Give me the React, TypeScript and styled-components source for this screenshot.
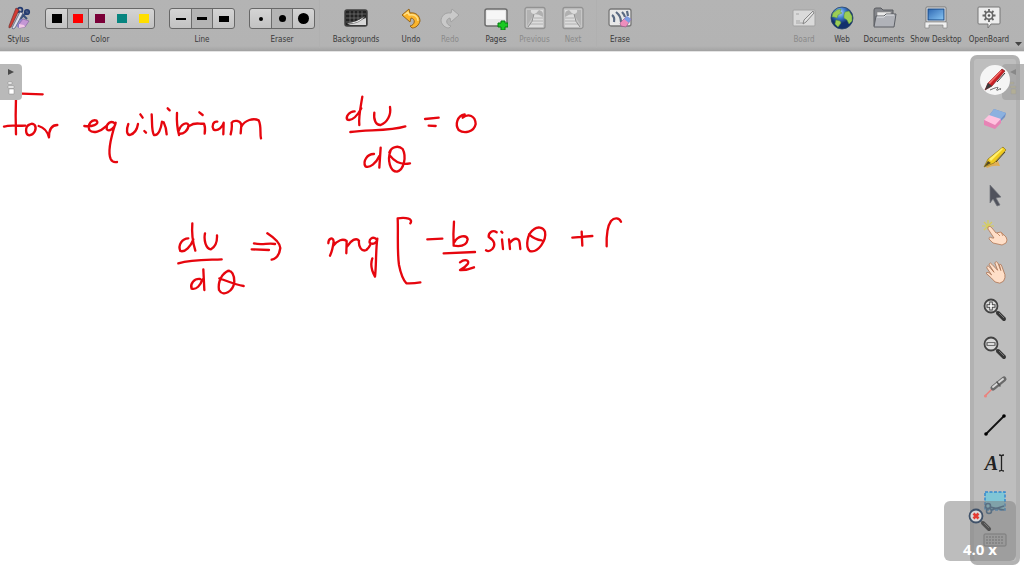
import React from "react";
import styled, { createGlobalStyle } from "styled-components";

const GlobalStyle = createGlobalStyle`
  *, *::before, *::after { box-sizing: border-box; }
  body {
    margin: 0;
    background: #fff;
    font-family: "DejaVu Sans Condensed", "Open Sans", "Noto Sans", sans-serif;
    color: #3a3a3a;
  }
  button { font: inherit; color: inherit; }
`;

const Page = styled.div`
  display: flex;
  flex-direction: column;
  min-height: 100vh;
`;

const Toolbar = styled.header`
  display: flex;
  align-items: stretch;
  height: 52px;
  background: linear-gradient(#b4b4b4 0, #b3b3b3 46px, #a6a6a6 50px, #a0a0a0 51px, #e4e4e4 51px);
`;

const Spacer = styled.div`
  flex: 1;
`;

const Divider = styled.div<{ $w: number }>`
  width: ${(p) => p.$w}px;
  flex: none;
  background: linear-gradient(90deg, transparent 45%, #b0b0b0 45%, #b0b0b0 55%, transparent 55%);
  margin-bottom: 4px;
`;

const ToolButton = styled.button<{ $w: number }>`
  display: flex;
  flex-direction: column;
  flex: none;
  align-items: center;
  width: ${(p) => p.$w}px;
  padding: 5px 0 0;
  border: 0;
  background: none;
  font-size: 8px;
  line-height: 12px;
  white-space: nowrap;
  &:disabled { color: #8a8a8a; }
`;

const IconSlot = styled.span`
  display: flex;
  align-items: center;
  justify-content: center;
  height: 26px;
  margin-bottom: 3px;
`;

const Group = styled.div`
  display: flex;
  flex-direction: column;
  align-items: center;
  flex: none;
  margin-left: 8px;
  padding-top: 8px;
  font-size: 8px;
  line-height: 12px;
  & + & { margin-left: 14px; }
`;

const Segments = styled.div`
  display: flex;
  height: 21px;
  margin-bottom: 5px;
  border: 1px solid #686868;
  border-radius: 3px;
  overflow: hidden;
  background: linear-gradient(#d4d4d4, #c2c2c2);
`;

const Segment = styled.button`
  display: flex;
  align-items: center;
  justify-content: center;
  width: 22px;
  padding: 0;
  border: 0;
  background: none;
  &:first-child, &:last-child { width: 21px; }
  &[aria-pressed="true"] {
    background: #b4b4b4;
    border: solid #6c6c6c;
    border-width: 0 1px;
  }
`;

const Mark = styled.span<{ $w: number; $h: number; $color: string; $round?: boolean }>`
  width: ${(p) => p.$w}px;
  height: ${(p) => p.$h}px;
  background: ${(p) => p.$color};
  border-radius: ${(p) => (p.$round ? "50%" : "0")};
`;

const MenuArrow = styled.button`
  display: flex;
  align-items: flex-end;
  justify-content: center;
  width: 11px;
  padding: 0 0 6px;
  border: 0;
  background: none;
`;

const Board = styled.main`
  position: relative;
  flex: 1;
  min-height: 524px;
  overflow: hidden;
  background: #fff;
`;

const Ink = styled.svg`
  position: absolute;
  inset: 0;
  width: 100%;
  height: 100%;
  fill: none;
  stroke: #e6060e;
  stroke-linecap: round;
  stroke-linejoin: round;
`;

const DrawerTab = styled.button<{ $side: "left" | "right" }>`
  position: absolute;
  top: 12px;
  ${(p) => p.$side}: 0;
  display: flex;
  flex-direction: column;
  align-items: center;
  width: 22px;
  height: 36px;
  padding: 4px 0 0;
  border: 0;
  border-radius: ${(p) => (p.$side === "left" ? "0 4px 4px 0" : "4px 0 0 4px")};
  background: #b9b9b9;
`;

const Palette = styled.nav`
  position: absolute;
  top: 3px;
  right: 4px;
  bottom: 11px;
  display: flex;
  flex-direction: column;
  width: 50px;
  padding: 2px 0;
  border: 4px solid rgba(160, 160, 160, 0.4);
  border-radius: 7px;
  background: rgba(162, 162, 162, 0.7);
`;

const PaletteButton = styled.button`
  display: flex;
  flex: 1;
  align-items: center;
  justify-content: center;
  padding: 0;
  border: 0;
  background: none;
`;

const ZoomBadge = styled.div`
  position: absolute;
  right: 8px;
  bottom: 15px;
  display: flex;
  flex-direction: column;
  align-items: center;
  gap: 6px;
  width: 72px;
  height: 60px;
  padding-top: 6px;
  border-radius: 6px;
  background: rgba(128, 128, 128, 0.52);
  color: #fff;
  font-family: "Open Sans", "Noto Sans", sans-serif;
  font-size: 15px;
  font-weight: 700;
  line-height: 20px;
`;

/* Pen strokes are stored in pen units, three to a pixel, from each phrase's origin. */
const phrases = [
  {
    x: 0,
    y: 3,
    strokes: [
      "M65 116L128 118M48 128Q46 180 48 238M12 215C30 208 55 214 76 212",
      "M88 209C74 215 76 240 88 241C102 240 112 222 104 210C98 204 90 206 84 212",
      "M116 213Q140 220 147 247C147 225 155 210 172 210",
      "M253 213C275 216 300 208 290 197C275 192 262 207 268 225C280 238 303 228 318 214",
      "M345 206C334 194 318 206 320 222C326 233 345 220 347 203C335 240 322 290 332 312C338 324 345 322 351 321",
      "M385 207C378 225 380 240 390 240C405 235 412 220 414 207M421 178L428 188M433 228L438 233",
      "M455 178C457 200 454 228 462 240C475 243 483 222 486 200M491 202Q499 218 500 238M503 160L509 166",
      "M531 174Q529 210 537 240M536 228C543 206 560 200 566 210C564 228 550 238 536 236",
      "M570 212C585 200 598 208 612 206Q617 218 614 236M598 172L608 180",
      "M652 200C640 198 634 212 641 224C655 230 668 215 671 203L670 238",
      "M692 238Q697 220 695 203C702 194 722 196 724 210L722 235M724 215C735 195 760 188 776 196C785 215 779 235 783 250",
    ],
  },
  {
    x: 330,
    y: 33,
    strokes: [
      "M74 79C58 78 46 96 52 104C66 110 84 90 94 70M97 35C93 60 85 95 88 120",
      "M133 83C130 105 138 121 152 120C172 112 184 90 180 66",
      "M61 141C120 134 180 138 226 124M285 102L326 98M296 122L317 123",
      "M404 88C382 92 374 118 386 135C402 147 432 142 437 117C436 92 415 84 398 98",
      "M132 207C112 206 98 228 106 244C120 250 138 235 148 213M152 188L148 248",
      "M182 196C171 225 180 260 201 260C222 255 230 215 218 192C205 180 185 185 178 202M180 212C195 232 215 240 240 235",
    ],
  },
  {
    x: 165,
    y: 158,
    strokes: [
      "M70 85C52 85 38 105 46 123C60 128 78 108 85 88M82 40C80 65 84 100 91 122",
      "M120 70C116 90 122 116 138 118C152 110 157 95 156 76M40 160C80 148 130 150 170 148",
      "M105 207C88 205 74 222 80 236C94 240 107 226 112 208M115 178L118 240",
      "M192 182C170 190 158 215 162 240C174 262 205 245 208 215C208 195 200 180 188 183M163 205C190 215 215 225 236 228",
      "M267 100C290 106 310 98 330 102M260 118L312 120M307 70C330 85 345 100 346 114C343 135 335 146 320 149",
      "M490 100C490 84 504 80 506 94Q503 120 495 137M504 108C518 90 534 85 545 93L544 130M546 110C558 90 574 82 582 92C580 110 590 126 604 120Q612 113 616 104",
      "M635 88C622 77 612 88 614 98C624 106 636 98 637 86C632 120 634 170 630 200Q613 170 622 145",
    ],
  },
  {
    x: 385,
    y: 153,
    strokes: [
      "M76 55C85 42 65 36 38 40C40 80 36 140 42 180C47 205 55 225 64 235Q85 236 106 232",
      "M127 103L172 101M207 50Q204 90 206 122M208 112C218 92 245 88 248 103C245 122 225 125 206 122M176 145L270 141",
      "M225 172C240 160 255 166 248 177Q240 188 225 195Q245 196 267 187",
      "M335 82C322 73 310 84 311 96C330 108 332 120 322 132Q312 142 303 136M351 103L354 132M349 80L352 83",
      "M372 103L375 132M374 114C388 96 402 98 404 114L406 132",
      "M448 72C427 84 420 124 434 138C460 145 485 105 480 80C474 64 456 66 448 72M432 88Q450 104 470 106",
      "M562 98L622 93M590 80L592 122M665 124C664 95 666 65 678 48C688 37 702 38 708 50",
    ],
  },
];

const StylusIcon = () => (
  <svg width="24" height="24" viewBox="0 0 24 24" fill="none">
    <path d="M9 20l5-8 2 1-4 9z" fill="#8e8ad0" />
    <path d="M13 13l8-8M20 13l-8-8" stroke="#384f7d" strokeWidth="2" />
    <circle cx="13" cy="4" r="2.4" stroke="#243b70" strokeWidth="1.8" />
    <circle cx="20" cy="6" r="2.2" stroke="#243b70" strokeWidth="1.8" />
    <path d="M2 20L9 2l3 2-8 17-2 1z" fill="#d53b34" stroke="#713331" strokeWidth=".7" />
    <path d="M5 22l8-16 3 1-8 15-2 1z" fill="#dfe2ed" stroke="#4c5572" strokeWidth=".7" />
    <path d="M12 18l4-5 6 2-4 6-6 1z" fill="#c497d5" stroke="#7c609c" strokeWidth=".6" />
    <path d="M12 18l5 1 1 2-6 1z" fill="#f2c7e5" />
  </svg>
);

const BackgroundsIcon = () => (
  <svg width="24" height="20" viewBox="0 0 24 20">
    <rect x="1" y="2" width="22" height="16" rx="2" fill="#222" stroke="#414141" strokeWidth="1.5" />
    <path d="M6 3v14M10 3v14M14 3v14M18 3v14M2 6h20M2 10h20M2 14h20" stroke="#777" strokeWidth=".7" />
    <path d="M4 17L22 10v7z" fill="#d8d8d8" />
    <path d="M4 15q9-1 17-7-5 8-18 8z" fill="#fff" stroke="#333" strokeWidth=".5" />
  </svg>
);

const TurnArrow = ({ redo }: { redo?: boolean }) => (
  <svg width="22" height="24" viewBox="0 0 22 24">
    <g transform={redo ? "translate(22 0) scale(-1 1)" : undefined} strokeLinejoin="round">
      <path
        d="M2 9l7-6 1 4c6-1 10 3 10 8-1 4-4 7-8 7l-2-2c5-1 6-7 1-8l-1 4z"
        fill={redo ? "#c9c9c9" : "#fbb52c"}
        stroke={redo ? "#a2a2a2" : "#95651e"}
      />
      {!redo && <path d="M4 9l4-3 1 3c6-1 9 2 9 6" fill="none" stroke="#ffe087" strokeWidth="1.4" />}
    </g>
  </svg>
);

const PagesIcon = () => (
  <svg width="24" height="24" viewBox="0 0 24 24">
    <rect x="1" y="3" width="22" height="17" rx="2" fill="#e8e8e8" stroke="#6c6c6c" strokeWidth="1.5" />
    <path d="M3 5h18v8H3z" fill="#f6f6f6" />
    <path d="M17 15h4v2h3v4h-3v3h-4v-3h-3v-4h3z" fill="#1bc922" stroke="#087d12" />
  </svg>
);

const TurnPageIcon = ({ next }: { next?: boolean }) => (
  <svg width="22" height="24" viewBox="0 0 22 24">
    <g transform={next ? "translate(22 0) scale(-1 1)" : undefined}>
      <rect x="1" y="1.5" width="20" height="21" rx="2" fill="#c6c6c6" stroke="#929292" strokeWidth="1.3" />
      <path d="M3 20V4h8L9 10z" fill="#b2b2b2" />
      <path d="M4 21q5-6 6-13Q6 7 7 4h12v17z" fill="#dcdcdc" />
      <path d="M15 4q4 1 4 4v3q-4-3-9-3 3-1 5-4z" fill="#b0b0b0" />
      <path d="M10 12h9M8 15h11M6 18h13" stroke="#a6a6a6" strokeWidth=".8" />
      <path d="M4 21q5-5 6-13" fill="none" stroke="#8f8f8f" />
    </g>
  </svg>
);

const EraseIcon = () => (
  <svg width="24" height="22" viewBox="0 0 24 22">
    <rect x="1" y="2" width="22" height="17" rx="2" fill="#e8e8e8" stroke="#777" strokeWidth="1.3" />
    <path d="M4 8q3 2 2 7M8 5q5 4 5 10M14 5q2 2 3 5M19 4l1 5" fill="none" stroke="#5b6a82" strokeWidth="2.2" />
    <path d="M12 16l6-6 5 2-5 8-5-1z" fill="#ed8ebd" stroke="#9c5c8c" strokeWidth=".7" />
    <path d="M16 12l3-3 4 3-2 4z" fill="#7d9de2" />
  </svg>
);

const BoardIcon = () => (
  <svg width="24" height="20" viewBox="0 0 24 20">
    <rect x="1" y="2" width="22" height="16" rx="1" fill="#dadada" stroke="#a2a2a2" />
    <path d="M4 6h3M4 13h4M4 15h7" stroke="#999" strokeWidth=".8" />
    <path d="M11 16l1-4 9-9 1 2-8 9z" fill="#e4e4e4" stroke="#858585" />
  </svg>
);

const GlobeIcon = () => (
  <svg width="24" height="24" viewBox="0 0 24 24">
    <defs>
      <radialGradient id="sea" cx=".4" cy=".25">
        <stop offset="0" stopColor="#b8d8fa" />
        <stop offset=".5" stopColor="#3f7dce" />
        <stop offset="1" stopColor="#12306c" />
      </radialGradient>
    </defs>
    <circle cx="12" cy="12" r="11" fill="url(#sea)" stroke="#284568" strokeWidth=".8" />
    <path d="M3 7l4-3 4-1-1 3 2 1-4 2-1 3-3-1-2 0zM15 6l4-1 3 5v5l-3 3-2-4-3-2 0-3zM6 14l4 1 1 2-3 4-3-3z" fill="#9ccd55" stroke="#5b953b" strokeWidth=".5" />
  </svg>
);

const FolderIcon = () => (
  <svg width="26" height="24" viewBox="0 0 26 24">
    <path d="M3 20V4q0-2 2-2h5l2 2h10v15z" fill="#83858a" stroke="#5a5c60" />
    <path d="M6 6h14v11H6z" fill="#e9e9e9" stroke="#888" strokeWidth=".6" />
    <path d="M3 21L5 10h8l2-2h10l-2 13z" fill="#b0b2b8" stroke="#5c5f65" />
    <path d="M6 11h7l2-2h8" fill="none" stroke="#e4e6e9" />
  </svg>
);

const DesktopIcon = () => (
  <svg width="26" height="24" viewBox="0 0 26 24">
    <defs>
      <linearGradient id="screen" x2="1" y2="1">
        <stop stopColor="#2e68b2" />
        <stop offset="1" stopColor="#8bc8f6" />
      </linearGradient>
    </defs>
    <rect x="3" y="1" width="20" height="15" rx="1" fill="#eee" stroke="#777" />
    <rect x="5" y="3" width="16" height="11" fill="url(#screen)" stroke="#174681" />
    <path d="M2 16h22v6h-4v-3H6v3H2z" fill="#f0f0f0" stroke="#888" strokeWidth=".7" />
  </svg>
);

const OpenBoardIcon = () => (
  <svg width="26" height="24" viewBox="0 0 26 24">
    <path d="M3 1h20q1 0 1 1v15q0 1-1 1h-8l-3 4v-4H3q-1 0-1-1V2q0-1 1-1z" fill="#ededed" stroke="#777" />
    <path d="M13 3v13M6.500 9.500h13M8.500 5l9 9M17.500 5l-9 9" stroke="#666" strokeWidth="1.8" />
    <circle cx="13" cy="9.500" r="3.700" fill="#ededed" stroke="#666" strokeWidth="1.6" />
    <circle cx="13" cy="9.500" r="1.300" fill="#555" />
  </svg>
);

const PenIcon = () => (
  <svg width="30" height="30" viewBox="0 0 30 30">
    <circle cx="15" cy="15" r="15" fill="#f5f5f5" />
    <path d="M10 25q9-4 8-2-3 3 0 2 4-3 2 0" fill="none" stroke="#6b6b6b" />
    <path d="M5 25l3-7L22 4l3 2-13 15z" fill="#c91f25" stroke="#7d2025" strokeWidth=".7" />
    <path d="M8 18L21 5l1 1L10 19z" fill="#f16a65" />
    <path d="M5 25l3-7 4 3z" fill="#3b3b3b" />
    <path d="M17 17l8-9" stroke="#333" />
  </svg>
);

const EraserIcon = () => (
  <svg width="26" height="26" viewBox="0 0 26 26">
    <path d="M12 4l12 4-1 4-7 7-10-7z" fill="#6f8fc6" />
    <path d="M12 4l12 4-6 7-11-4z" fill="#8bb1df" />
    <path d="M2 15l5-5 12 4-6 7z" fill="#ffc2df" />
    <path d="M2 15l11 5v4L2 20zM13 20l6-6v4l-6 6z" fill="#e783b5" />
  </svg>
);

const MarkerIcon = () => (
  <svg width="26" height="26" viewBox="0 0 26 26">
    <path d="M4 23q6-8 12-6l2 5q-7-1-13 2z" fill="#dfae55" />
    <path d="M2 23l4-8L21 3l3 3-12 13z" fill="#f0cb1d" stroke="#8b721d" strokeWidth=".7" />
    <path d="M7 15L20 4l1 1L9 17z" fill="#fff06b" />
    <path d="M2 23l4-6 3 2z" fill="#544828" />
    <path d="M14 18l9-10" stroke="#51461f" />
  </svg>
);

const PointerIcon = () => (
  <svg width="26" height="26" viewBox="0 0 26 26">
    <path d="M8 3l11 12-5 1 4 7-3 1-4-7-3 4z" fill="#50525c" stroke="#73757c" strokeWidth=".7" />
  </svg>
);

const PointHandIcon = () => (
  <svg width="30" height="28" viewBox="0 0 30 28">
    <path d="M2 7h12M8 1v10M4 3l7 7M12 3l-8 8" stroke="#d6ce5a" strokeWidth="1.200" />
    <path d="M8 8q2-2 4 1l4 5 5-1 5 5q2 3 0 6l-4 2-9-2-4-4q0-3 3-1l2 0L8 10z" fill="#ffdfc8" stroke="#b27857" strokeWidth=".8" />
    <path d="M17 14l3 3M21 13l2 4" stroke="#c58e6b" />
  </svg>
);

const HandIcon = () => (
  <svg width="26" height="26" viewBox="0 0 26 26">
    <g transform="rotate(-14 13 13)">
      <path d="M4 12q2-2 5 3L6 7q1-3 3 0l3 6-3-9q2-2 3 1l4 7-1-8q2-2 3 1l1 8 0-6q2-1 2 2l1 9q0 3-3 6l-4 1q-5-1-7-7z" fill="#ffdfc8" stroke="#ad7758" strokeWidth=".8" />
    </g>
  </svg>
);

const MagnifierIcon = ({ kind }: { kind: "in" | "out" | "reset" }) => (
  <svg width="26" height="26" viewBox="0 0 26 26" fill="none">
    <path d="M13 13l3 3" stroke="#777" strokeWidth="2" />
    <path d="M16 16l6 6" stroke={kind === "reset" ? "#505050" : "#373737"} strokeWidth="4" strokeLinecap="round" />
    <path d="M17 16l5 5" stroke="#777" strokeWidth="1" />
    <circle cx="9" cy="9" r="6.500" fill="#d8d8d8" stroke={kind === "reset" ? "#405269" : "#424242"} strokeWidth="1.8" />
    {kind === "reset" ? (
      <path d="M6.500 6.500l5 5M11.500 6.500l-5 5" stroke="#e33b32" strokeWidth="2.6" />
    ) : (
      <>
        <path d={kind === "in" ? "M4.500 9h9M9 4.500v9" : "M4.500 9h9"} stroke="#444" strokeWidth="3.4" />
        <path d={kind === "in" ? "M5.500 9h7M9 5.500v7" : "M5.500 9h7"} stroke="#fff" strokeWidth="1.6" />
      </>
    )}
  </svg>
);

const LaserIcon = () => (
  <svg width="26" height="26" viewBox="0 0 26 26" strokeLinecap="round">
    <path d="M3 22l8-8" stroke="#ed7d77" strokeWidth="1.4" />
    <circle cx="3.500" cy="22" r="1.500" fill="#e98580" />
    <path d="M11 14l11-9" stroke="#6a6a6a" strokeWidth="5" />
    <path d="M11 13l10-8" stroke="#d8d8d8" strokeWidth="2" />
    <path d="M15 8l3 4" stroke="#555" strokeWidth="1.4" />
  </svg>
);

const LineIcon = () => (
  <svg width="26" height="26" viewBox="0 0 26 26">
    <path d="M4 22L22 4" stroke="#111" strokeWidth="1.8" />
    <circle cx="4" cy="22" r="1.800" />
    <circle cx="22" cy="4" r="1.800" />
  </svg>
);

const Letter = styled.span`
  font: italic 700 20px/26px "Liberation Serif", serif;
  color: #222;
`;

const TextIcon = () => (
  <>
    <Letter>A</Letter>
    <svg width="7" height="20" viewBox="0 0 7 20" fill="none" stroke="#222" strokeWidth="1.300">
      <path d="M1 2q2 0 2.500 1Q4 2 6 2M3.500 3v14M1 18q2 0 2.500-1 .5 1 2.500 1" />
    </svg>
  </>
);

const CaptureIcon = () => (
  <svg width="26" height="26" viewBox="0 0 26 26">
    <rect x="3" y="3" width="20" height="18" fill="#80c6d6" stroke="#3489ce" strokeWidth="1.500" strokeDasharray="3 1.500" />
    <g fill="none" stroke="#315c83" strokeWidth="1.600">
      <circle cx="6" cy="17" r="2.500" />
      <circle cx="7" cy="22" r="2.500" />
      <path d="M8 18l14 3M9 21l13-4" />
    </g>
  </svg>
);

const KeyboardIcon = () => (
  <svg width="26" height="26" viewBox="0 0 26 26">
    <rect x="2" y="7" width="22" height="12" rx="1" fill="#b4b4b4" stroke="#777" />
    <path d="M4 10h18M4 13h18M4 16h18" stroke="#666" strokeWidth="1.200" strokeDasharray="2 1" />
  </svg>
);

const tools = [
  { label: "Annotate", icon: <PenIcon /> },
  { label: "Erase annotation", icon: <EraserIcon /> },
  { label: "Highlight", icon: <MarkerIcon /> },
  { label: "Select", icon: <PointerIcon /> },
  { label: "Interact", icon: <PointHandIcon /> },
  { label: "Scroll page", icon: <HandIcon /> },
  { label: "Zoom in", icon: <MagnifierIcon kind="in" /> },
  { label: "Zoom out", icon: <MagnifierIcon kind="out" /> },
  { label: "Laser pointer", icon: <LaserIcon /> },
  { label: "Draw line", icon: <LineIcon /> },
  { label: "Write text", icon: <TextIcon /> },
  { label: "Capture area", icon: <CaptureIcon /> },
  { label: "Virtual keyboard", icon: <KeyboardIcon /> },
];

type MarkSpec = { name: string; w: number; h: number; color: string; round?: boolean };

const colors: MarkSpec[] = [
  { name: "Black", w: 10, h: 9, color: "#000" },
  { name: "Red", w: 10, h: 9, color: "#ff0000" },
  { name: "Maroon", w: 10, h: 9, color: "#7b0038" },
  { name: "Teal", w: 10, h: 9, color: "#078580" },
  { name: "Yellow", w: 10, h: 9, color: "#ffdf00" },
];
const lines: MarkSpec[] = [
  { name: "Fine", w: 10, h: 2, color: "#000" },
  { name: "Medium", w: 10, h: 3, color: "#000" },
  { name: "Thick", w: 10, h: 6, color: "#000" },
];
const erasers: MarkSpec[] = [
  { name: "Small", w: 4, h: 4, color: "#000", round: true },
  { name: "Medium", w: 7, h: 7, color: "#000", round: true },
  { name: "Large", w: 11, h: 11, color: "#000", round: true },
];

const Choice = ({ label, marks }: { label: string; marks: MarkSpec[] }) => {
  const [active, setActive] = React.useState(1);
  return (
    <Group role="group" aria-label={label}>
      <Segments>
        {marks.map((m, i) => (
          <Segment key={m.name} aria-label={m.name} aria-pressed={i === active} onClick={() => setActive(i)}>
            <Mark $w={m.w} $h={m.h} $color={m.color} $round={m.round} />
          </Segment>
        ))}
      </Segments>
      {label}
    </Group>
  );
};

const Tool = ({ label, w, icon, disabled }: { label: string; w: number; icon: React.ReactNode; disabled?: boolean }) => (
  <ToolButton $w={w} disabled={disabled}>
    <IconSlot>{icon}</IconSlot>
    {label}
  </ToolButton>
);

const TabGlyph = ({ flip }: { flip?: boolean }) => (
  <svg width="12" height="28" viewBox="0 0 12 28">
    <path d={flip ? "M9 1v6L3 4z" : "M3 1v6l6-3z"} fill="#4a4a4a" />
    <path d="M3 14h4v2H3zM3 18h6v2H3zM4 21h5v5H4z" fill={flip ? "#d5c878" : "#fff"} stroke="#888" strokeWidth=".5" />
  </svg>
);

export default function App() {
  return (
    <Page>
      <GlobalStyle />
      <Toolbar>
        <Tool label="Stylus" w={37} icon={<StylusIcon />} />
        <Choice label="Color" marks={colors} />
        <Choice label="Line" marks={lines} />
        <Choice label="Eraser" marks={erasers} />
        <Divider $w={10} />
        <Tool label="Backgrounds" w={62} icon={<BackgroundsIcon />} />
        <Divider $w={4} />
        <Tool label="Undo" w={40} icon={<TurnArrow />} />
        <Tool label="Redo" w={38} icon={<TurnArrow redo />} disabled />
        <Divider $w={8} />
        <Tool label="Pages" w={38} icon={<PagesIcon />} />
        <Tool label="Previous" w={39} icon={<TurnPageIcon />} disabled />
        <Tool label="Next" w={38} icon={<TurnPageIcon next />} disabled />
        <Divider $w={9} />
        <Tool label="Erase" w={38} icon={<EraseIcon />} />
        <Spacer />
        <Tool label="Board" w={38} icon={<BoardIcon />} disabled />
        <Tool label="Web" w={38} icon={<GlobeIcon />} />
        <Tool label="Documents" w={46} icon={<FolderIcon />} />
        <Tool label="Show Desktop" w={58} icon={<DesktopIcon />} />
        <Tool label="OpenBoard" w={48} icon={<OpenBoardIcon />} />
        <MenuArrow aria-label="More">
          <svg width="7" height="4" viewBox="0 0 7 4">
            <path d="M0 0h7L3.500 4z" fill="#444" />
          </svg>
        </MenuArrow>
      </Toolbar>
      <Board>
        <Ink role="img" aria-label="Handwritten derivation">
          {phrases.map((p) => (
            <g key={p.x} transform={`translate(${p.x} ${p.y}) scale(0.33333)`} strokeWidth="7">
              {p.strokes.map((d) => (
                <path key={d} d={d} />
              ))}
            </g>
          ))}
        </Ink>
        <DrawerTab $side="left" aria-label="Open page list">
          <TabGlyph />
        </DrawerTab>
        <DrawerTab $side="right" aria-label="Open library">
          <TabGlyph flip />
        </DrawerTab>
        <Palette aria-label="Drawing tools">
          {tools.map((t) => (
            <PaletteButton key={t.label} aria-label={t.label}>
              {t.icon}
            </PaletteButton>
          ))}
        </Palette>
        <ZoomBadge>
          <MagnifierIcon kind="reset" />
          4.0 x
        </ZoomBadge>
      </Board>
    </Page>
  );
}
